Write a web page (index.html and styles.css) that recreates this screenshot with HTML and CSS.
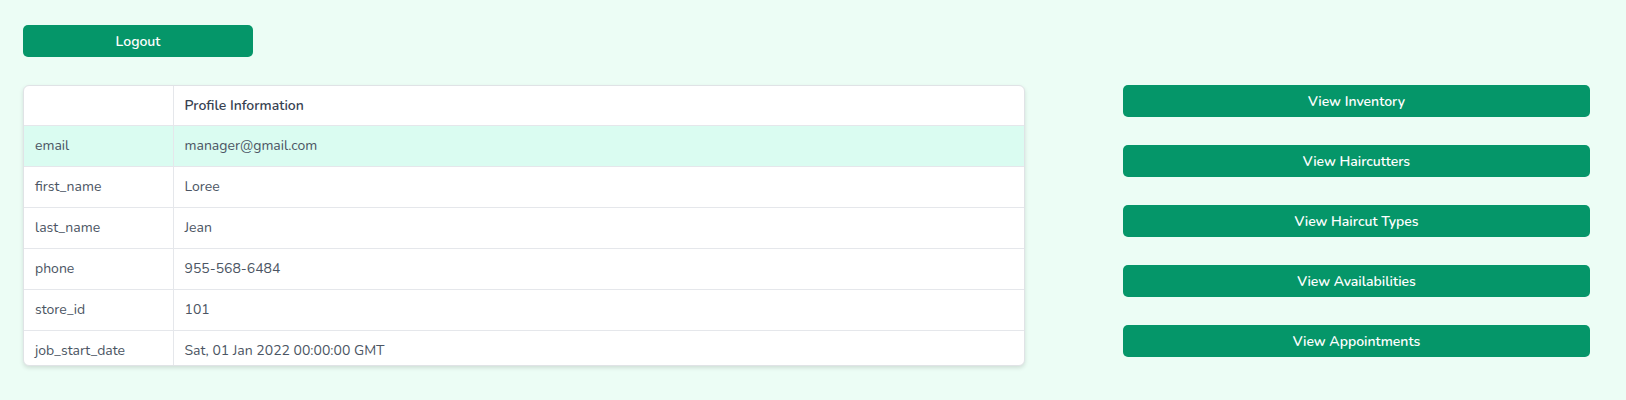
FILE: index.html
```html
<!DOCTYPE html>
<html>
<head>
<meta charset="utf-8">
<link rel="stylesheet" href="styles.css">
</head>
<body>
<div class="page">
  <button class="btn btn-logout">Logout</button>
  <div class="main">
    <div class="card">
      <table class="profile">
        <thead>
          <tr><th class="key"></th><th>Profile Information</th></tr>
        </thead>
        <tbody>
          <tr class="hl"><td class="key">email</td><td>manager@gmail.com</td></tr>
          <tr><td class="key">first_name</td><td>Loree</td></tr>
          <tr><td class="key">last_name</td><td>Jean</td></tr>
          <tr><td class="key">phone</td><td>955-568-6484</td></tr>
          <tr><td class="key">store_id</td><td>101</td></tr>
          <tr><td class="key">job_start_date</td><td>Sat, 01 Jan 2022 00:00:00 GMT</td></tr>
        </tbody>
      </table>
    </div>
    <div class="actions">
      <button class="btn">View Inventory</button>
      <button class="btn">View Haircutters</button>
      <button class="btn">View Haircut Types</button>
      <button class="btn">View Availabilities</button>
      <button class="btn">View Appointments</button>
    </div>
  </div>
</div>
</body>
</html>
```
FILE: styles.css
```css
html, body {
  margin: 0;
  padding: 0;
  background: #ecfdf5;
  font-family: "Nunito", "Lato", "Open Sans", sans-serif;
}
.page {
  padding: 25px 23px;
}
.btn {
  display: block;
  border: none;
  background: #059669;
  color: #ffffff;
  font-family: inherit;
  font-size: 14px;
  font-weight: 600;
  height: 32px;
  border-radius: 5px;
  padding: 0;
  text-align: center;
}
.btn-logout {
  width: 230px;
}
.main {
  display: flex;
  align-items: flex-start;
  margin-top: 28px;
  gap: 98px;
}
.card {
  flex: 0 0 1002px;
  width: 1002px;
  height: 281px;
  box-sizing: border-box;
  overflow: hidden;
  background: #ffffff;
  border: 1px solid #e0e3e6;
  border-radius: 6px;
  box-shadow: 0 2px 4px rgba(0,0,0,0.12);
}
.profile {
  width: 100%;
  border-collapse: collapse;
  font-size: 14px;
  color: #4b5563;
}
.profile th, .profile td {
  height: 41px;
  padding: 0 11px;
  text-align: left;
  border-bottom: 1px solid #e5e7eb;
  box-sizing: border-box;
}
.profile th {
  height: 39px;
  font-weight: 600;
  color: #374151;
}
.profile .key {
  width: 149px;
  padding-left: 11px;
  border-right: 1px solid #e5e7eb;
}
.profile tr.hl td {
  background: #dafcf1;
}
.actions {
  display: flex;
  flex-direction: column;
  gap: 28px;
  flex: 0 0 467px;
  width: 467px;
}
.actions .btn {
  width: 100%;
}
```
